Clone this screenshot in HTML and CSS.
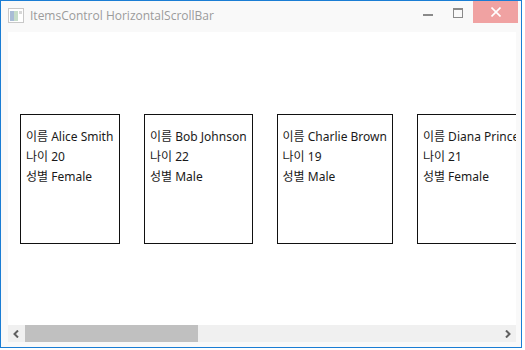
FILE: index.html
```html
<!DOCTYPE html>
<html lang="ko">
<head>
  <meta charset="UTF-8" />
  <title>ItemsControl HorizontalScrollBar</title>
  <link rel="stylesheet" href="styles.css">
</head>
<body>
  <div class="window">
    <div class="titlebar">
      <svg class="app-icon" width="16" height="15" viewBox="0 0 16 15">
        <rect x="0.5" y="0.5" width="15" height="14" fill="#fff" stroke="#c8c8c8"/>
        <rect x="2" y="3" width="4" height="10" fill="#a9bcd6"/>
        <rect x="6" y="3" width="4" height="10" fill="#c5dcc9"/>
        <rect x="11" y="3" width="3" height="3" fill="#d8d8d8"/>
      </svg>
      <span class="title">ItemsControl HorizontalScrollBar</span>
      <div class="caption-buttons">
        <span class="cap-btn"><span class="min-glyph"></span></span>
        <span class="cap-btn"><span class="max-glyph"></span></span>
        <span class="cap-btn close">
          <svg width="10" height="10" viewBox="0 0 10 10">
            <path d="M0.5 0.5 L9.5 9.5 M9.5 0.5 L0.5 9.5" stroke="#fff" stroke-width="1.6"/>
          </svg>
        </span>
      </div>
    </div>

    <div class="client">
      <div class="items">
        <div class="card">
          <div>이름 Alice Smith</div>
          <div>나이 20</div>
          <div>성별 Female</div>
        </div>
        <div class="card">
          <div>이름 Bob Johnson</div>
          <div>나이 22</div>
          <div>성별 Male</div>
        </div>
        <div class="card">
          <div>이름 Charlie Brown</div>
          <div>나이 19</div>
          <div>성별 Male</div>
        </div>
        <div class="card">
          <div>이름 Diana Prince</div>
          <div>나이 21</div>
          <div>성별 Female</div>
        </div>
      </div>

      <div class="hscroll">
        <span class="arrow">
          <svg width="7" height="8" viewBox="0 0 7 8"><path d="M5 0.5 L1.5 4 L5 7.5" fill="none" stroke="#606060" stroke-width="2"/></svg>
        </span>
        <div class="track">
          <div class="thumb"></div>
        </div>
        <span class="arrow">
          <svg width="7" height="8" viewBox="0 0 7 8"><path d="M2 0.5 L5.5 4 L2 7.5" fill="none" stroke="#606060" stroke-width="2"/></svg>
        </span>
      </div>
    </div>
  </div>
</body>
</html>
```

FILE: styles.css
```css
body {
  margin: 0;
  background: #fff;
  font-family: "Noto Sans", "Noto Sans CJK KR", sans-serif;
}
.window {
  width: 522px;
  height: 348px;
  box-sizing: border-box;
  border: 1px solid #1a7dd4;
  background: #f9f9f9;
  padding: 0 5px 5px 7px;
  display: flex;
  flex-direction: column;
}
.titlebar {
  height: 31px;
  display: flex;
  align-items: flex-start;
}
.app-icon {
  margin-top: 7px;
  flex: none;
}
.title {
  margin: 7px 0 0 6px;
  font-size: 12px;
  line-height: 16px;
  color: #9b9b9b;
  font-family: "Open Sans", sans-serif;
}
.caption-buttons {
  margin-left: auto;
  margin-right: -2px;
  display: flex;
}
.cap-btn {
  width: 30px;
  height: 22px;
  display: flex;
  align-items: center;
  justify-content: center;
}
.cap-btn.close {
  width: 45px;
  background: #f0a2a2;
}
.min-glyph {
  width: 10px;
  height: 2px;
  background: #8a8a8a;
  margin-top: 5px;
}
.max-glyph {
  width: 10px;
  height: 10px;
  box-sizing: border-box;
  border: 1px solid #8a8a8a;
  border-top-width: 2px;
  margin-top: 2px;
}
.client {
  flex: 1;
  background: #fff;
  display: flex;
  flex-direction: column;
  overflow: hidden;
}
.items {
  flex: 1;
  display: flex;
  align-items: center;
  overflow: hidden;
}
.card {
  flex: none;
  min-width: 88px;
  height: 116px;
  margin: 1px 12px 0;
  padding: 12px 5px 0 5px;
  border: 1px solid #111;
  font-size: 12px;
  line-height: 20px;
  color: #1a1a1a;
  white-space: nowrap;
}
.hscroll {
  height: 17px;
  display: flex;
  background: #f0f0f0;
}
.arrow {
  width: 17px;
  display: flex;
  align-items: center;
  justify-content: center;
  flex: none;
}
.track {
  flex: 1;
}
.thumb {
  width: 173px;
  height: 100%;
  background: #c0c0c0;
}
```
